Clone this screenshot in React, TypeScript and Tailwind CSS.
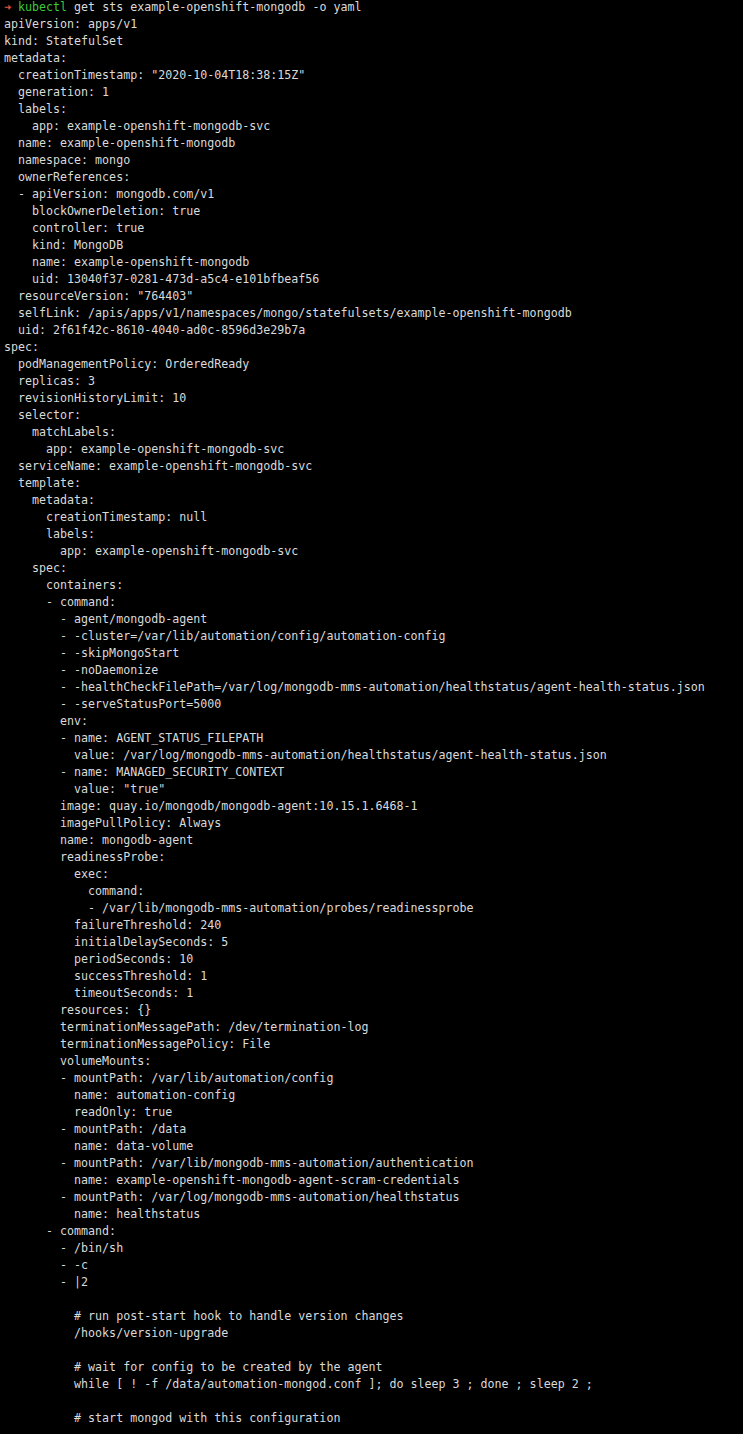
import React from "react";

const lines: string[] = [
  "apiVersion: apps/v1",
  "kind: StatefulSet",
  "metadata:",
  '  creationTimestamp: "2020-10-04T18:38:15Z"',
  "  generation: 1",
  "  labels:",
  "    app: example-openshift-mongodb-svc",
  "  name: example-openshift-mongodb",
  "  namespace: mongo",
  "  ownerReferences:",
  "  - apiVersion: mongodb.com/v1",
  "    blockOwnerDeletion: true",
  "    controller: true",
  "    kind: MongoDB",
  "    name: example-openshift-mongodb",
  "    uid: 13040f37-0281-473d-a5c4-e101bfbeaf56",
  '  resourceVersion: "764403"',
  "  selfLink: /apis/apps/v1/namespaces/mongo/statefulsets/example-openshift-mongodb",
  "  uid: 2f61f42c-8610-4040-ad0c-8596d3e29b7a",
  "spec:",
  "  podManagementPolicy: OrderedReady",
  "  replicas: 3",
  "  revisionHistoryLimit: 10",
  "  selector:",
  "    matchLabels:",
  "      app: example-openshift-mongodb-svc",
  "  serviceName: example-openshift-mongodb-svc",
  "  template:",
  "    metadata:",
  "      creationTimestamp: null",
  "      labels:",
  "        app: example-openshift-mongodb-svc",
  "    spec:",
  "      containers:",
  "      - command:",
  "        - agent/mongodb-agent",
  "        - -cluster=/var/lib/automation/config/automation-config",
  "        - -skipMongoStart",
  "        - -noDaemonize",
  "        - -healthCheckFilePath=/var/log/mongodb-mms-automation/healthstatus/agent-health-status.json",
  "        - -serveStatusPort=5000",
  "        env:",
  "        - name: AGENT_STATUS_FILEPATH",
  "          value: /var/log/mongodb-mms-automation/healthstatus/agent-health-status.json",
  "        - name: MANAGED_SECURITY_CONTEXT",
  '          value: "true"',
  "        image: quay.io/mongodb/mongodb-agent:10.15.1.6468-1",
  "        imagePullPolicy: Always",
  "        name: mongodb-agent",
  "        readinessProbe:",
  "          exec:",
  "            command:",
  "            - /var/lib/mongodb-mms-automation/probes/readinessprobe",
  "          failureThreshold: 240",
  "          initialDelaySeconds: 5",
  "          periodSeconds: 10",
  "          successThreshold: 1",
  "          timeoutSeconds: 1",
  "        resources: {}",
  "        terminationMessagePath: /dev/termination-log",
  "        terminationMessagePolicy: File",
  "        volumeMounts:",
  "        - mountPath: /var/lib/automation/config",
  "          name: automation-config",
  "          readOnly: true",
  "        - mountPath: /data",
  "          name: data-volume",
  "        - mountPath: /var/lib/mongodb-mms-automation/authentication",
  "          name: example-openshift-mongodb-agent-scram-credentials",
  "        - mountPath: /var/log/mongodb-mms-automation/healthstatus",
  "          name: healthstatus",
  "      - command:",
  "        - /bin/sh",
  "        - -c",
  "        - |2",
  "",
  "          # run post-start hook to handle version changes",
  "          /hooks/version-upgrade",
  "",
  "          # wait for config to be created by the agent",
  "          while [ ! -f /data/automation-mongod.conf ]; do sleep 3 ; done ; sleep 2 ;",
  "",
  "          # start mongod with this configuration",
];

export default function App() {
  return (
    <div className="w-[743px] h-[1435px] overflow-hidden bg-black px-[4px] -mt-[1px]">
      <pre className="m-0 whitespace-pre font-['DejaVu_Sans_Mono','Liberation_Mono',monospace] text-[11.65px] leading-[17px] text-[#dadada]">
        <div className="h-[17px]">
          <span className="text-[#e5533d]">➜</span>{" "}
          <span className="text-[#3cc83c]">kubectl</span> get sts example-openshift-mongodb -o yaml
        </div>
        {lines.map((l, i) => (
          <div key={i} className="h-[17px]">
            {l}
          </div>
        ))}
      </pre>
    </div>
  );
}
